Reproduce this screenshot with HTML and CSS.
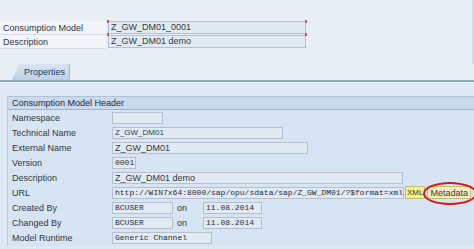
FILE: index.html
```html
<!DOCTYPE html>
<html lang="en">
<head>
  <meta charset="UTF-8">
  <title>Consumption Model</title>
  <link rel="stylesheet" href="styles.css">
</head>
<body>
  <div class="top">
    <div class="row">
      <span class="lbl">Consumption Model</span>
      <span class="fld sans w-model marked">Z_GW_DM01_0001</span>
    </div>
    <div class="row">
      <span class="lbl">Description</span>
      <span class="fld sans w-model">Z_GW_DM01 demo</span>
    </div>
  </div>

  <div class="tabs">
    <span class="tab">Properties</span>
  </div>

  <div class="panel">
    <div class="group">
      <div class="ghead">Consumption Model Header</div>

      <div class="frow">
        <span class="flbl">Namespace</span>
        <span class="fld w-ns"></span>
      </div>
      <div class="frow">
        <span class="flbl">Technical Name</span>
        <span class="fld sans small w-tech">Z_GW_DM01</span>
      </div>
      <div class="frow">
        <span class="flbl">External Name</span>
        <span class="fld sans w-ext">Z_GW_DM01</span>
      </div>
      <div class="frow">
        <span class="flbl">Version</span>
        <span class="fld mono w-ver">0001</span>
      </div>
      <div class="frow">
        <span class="flbl">Description</span>
        <span class="fld sans w-desc">Z_GW_DM01 demo</span>
      </div>
      <div class="frow">
        <span class="flbl">URL</span>
        <span class="fld mono w-url">http://WIN7x64:8000/sap/opu/sdata/sap/Z_GW_DM01/?$format=xml</span>
        <span class="btn btn-xml">XML</span>
        <span class="btn btn-meta">Metadata<span class="ring"></span></span>
      </div>
      <div class="frow">
        <span class="flbl">Created By</span>
        <span class="fld mono w-user">BCUSER</span>
        <span class="on">on</span>
        <span class="fld mono w-date">11.08.2014</span>
      </div>
      <div class="frow">
        <span class="flbl">Changed By</span>
        <span class="fld mono w-user">BCUSER</span>
        <span class="on">on</span>
        <span class="fld mono w-date">11.08.2014</span>
      </div>
      <div class="frow">
        <span class="flbl">Model Runtime</span>
        <span class="fld mono w-rt">Generic Channel</span>
      </div>
    </div>
  </div>
</body>
</html>
```

FILE: styles.css
```css
body {
  margin: 0;
  width: 474px;
  height: 249px;
  overflow: hidden;
  background-color: #e9eef5;
  font-family: "Liberation Sans", Arial, sans-serif;
  font-size: 9px;
  color: #33383f;
}

.top {
  padding-top: 21px;
  border-right: 2px solid #d3dbe4;
  height: 43px;
}

.row {
  display: flex;
  height: 14px;
}

.lbl {
  width: 106px;
  padding-left: 3px;
  line-height: 14px;
  background-color: #f1f4f8;
  border-bottom: 1px solid #d5dde6;
  margin-right: 1px;
  box-sizing: border-box;
}

.fld {
  height: 12px;
  box-sizing: border-box;
  line-height: 10px;
  padding-left: 2px;
  background-color: #e1eaf3;
  border: 1px solid #b4c0cc;
  white-space: nowrap;
  overflow: hidden;
}

.top .fld {
  height: 13px;
  margin-left: 1px;
  line-height: 11px;
}

.sans {
  font-family: "Liberation Sans", Arial, sans-serif;
  font-size: 9px;
}

.small {
  font-size: 8px;
}

.mono {
  font-family: "Liberation Mono", "Courier New", monospace;
  font-size: 8px;
  color: #2a2e33;
}

.marked {
  position: relative;
  overflow: visible;
}

.marked::before,
.marked::after {
  content: "";
  position: absolute;
  top: -2px;
  width: 2px;
  height: 16px;
  background: linear-gradient(#d8505a 0 3px, transparent 3px 13px, #d8505a 13px);
}

.marked::before {
  left: -2px;
}

.marked::after {
  right: -2px;
}

.w-model { width: 198px; }
.w-ns { width: 51px; }
.w-tech { width: 171px; }
.w-ext { width: 196px; }
.w-ver { width: 24px; }
.w-desc { width: 291px; }
.w-url { width: 292px; }
.w-user { width: 61px; }
.w-date { width: 59px; }
.w-rt { width: 100px; }

.tabs {
  height: 16px;
  padding-left: 12px;
  display: flex;
  align-items: flex-end;
  border-bottom: 2px solid #8ea8c4;
}

.tab {
  height: 16px;
  width: 58px;
  box-sizing: border-box;
  padding-left: 12px;
  line-height: 16px;
  color: #1d3f66;
  background: linear-gradient(#d8e4f1, #bcd0e6);
  border-right: 1px solid #a2b8d0;
  clip-path: polygon(7px 0, 100% 0, 100% 100%, 0 100%);
}

.panel {
  height: 160px;
  background-color: #dfe9f4;
  border-top: 1px solid #f3f6fa;
  padding: 13px 0 0 7px;
}

.group {
  height: 150px;
  background-color: #d6e4f3;
  border-left: 1px solid #b9cadc;
}

.ghead {
  height: 12px;
  line-height: 12px;
  padding-left: 4px;
  color: #1f2a38;
  background-color: #cad9eb;
  border-top: 1px solid #b0c2d6;
  border-bottom: 1px solid #9fb4cb;
}

.frow {
  display: flex;
  align-items: center;
  height: 15px;
}

.frow:first-of-type {
  margin-top: -1px;
}

.flbl {
  width: 104px;
  padding-left: 4px;
  box-sizing: border-box;
}

.on {
  width: 30px;
  padding-left: 4px;
  box-sizing: border-box;
}

.btn {
  height: 13px;
  line-height: 12px;
  box-sizing: border-box;
  font-size: 9px;
  color: #3a3a20;
  border: 1px solid #c9bd6a;
}

.btn-xml {
  margin-left: 1px;
  padding: 0 1px;
  font-size: 8px;
  background-color: #fbef8e;
}

.btn-meta {
  position: relative;
  margin-left: 2px;
  padding: 0 2px;
  background-color: #f8f0b8;
}

.ring {
  position: absolute;
  left: -5px;
  top: -5px;
  width: 50px;
  height: 19px;
  border: 2px solid #d6161e;
  border-radius: 50%;
}
```
